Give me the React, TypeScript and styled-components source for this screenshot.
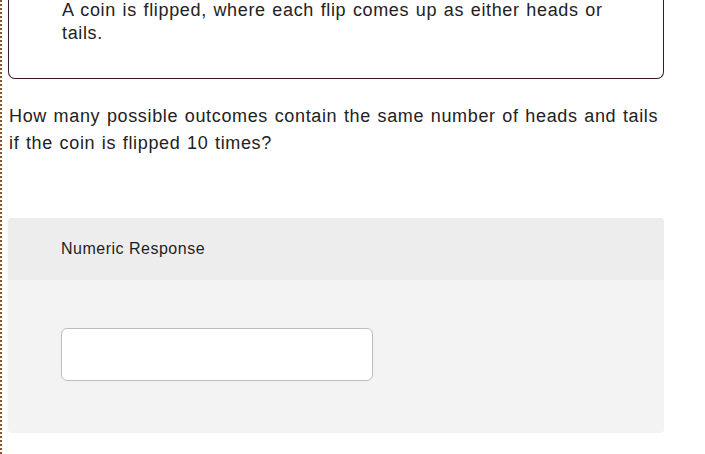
import styled, { createGlobalStyle } from "styled-components";

const GlobalStyle = createGlobalStyle`
  html, body {
    margin: 0;
    padding: 0;
    background: #ffffff;
  }

  body {
    font-family: "Liberation Sans", Arial, sans-serif;
    color: #222222;
    letter-spacing: 0.65px;
    word-spacing: 1px;
  }
`;

const App = () => {
  return (
    <>
      <GlobalStyle />
      <Page>
        <StimulusCard>
          <p>
            A coin is flipped, where each flip comes up as either heads or
            tails.
          </p>
        </StimulusCard>

        <Question>
          How many possible outcomes contain the same number of heads and tails
          if the coin is flipped 10 times?
        </Question>

        <ResponsePanel>
          <PanelHeader>Numeric Response</PanelHeader>
          <PanelBody>
            <AnswerInput type="text" aria-label="Numeric Response" />
          </PanelBody>
        </ResponsePanel>
      </Page>
    </>
  );
};

const Page = styled.div`
  min-height: 454px;
  box-sizing: border-box;
  border-left: 2px dotted #8a5427;
  padding: 0 42px 0 6px;

  display: flex;
  flex-direction: column;
  align-items: flex-start;
`;

const StimulusCard = styled.div`
  width: 656px;
  box-sizing: border-box;
  border: 1px solid #3c1830;
  border-top: none;
  border-radius: 0 0 7px 7px;
  padding: 0 53px 32px 53px;

  p {
    margin: -1px 0 1px;
    font-size: 18px;
    line-height: 23px;
  }
`;

const Question = styled.p`
  width: 656px;
  margin: 24px 0 61px;
  padding-left: 1px;
  box-sizing: border-box;
  font-size: 18px;
  line-height: 27px;
`;

const ResponsePanel = styled.div`
  width: 656px;
  border-radius: 4px;
  overflow: hidden;
  background: #f3f3f3;
`;

const PanelHeader = styled.div`
  height: 62px;
  padding-left: 53px;
  background: #ededed;

  display: flex;
  align-items: center;

  font-size: 16px;
  letter-spacing: 0.5px;
  word-spacing: 0;
  color: #1e1e1e;
`;

const PanelBody = styled.div`
  padding: 48px 53px 52px;
`;

const AnswerInput = styled.input`
  display: block;
  width: 312px;
  height: 53px;
  box-sizing: border-box;
  border: 1px solid #bdbdbd;
  border-radius: 6px;
  background: #ffffff;
  outline: none;
`;

export default App;
